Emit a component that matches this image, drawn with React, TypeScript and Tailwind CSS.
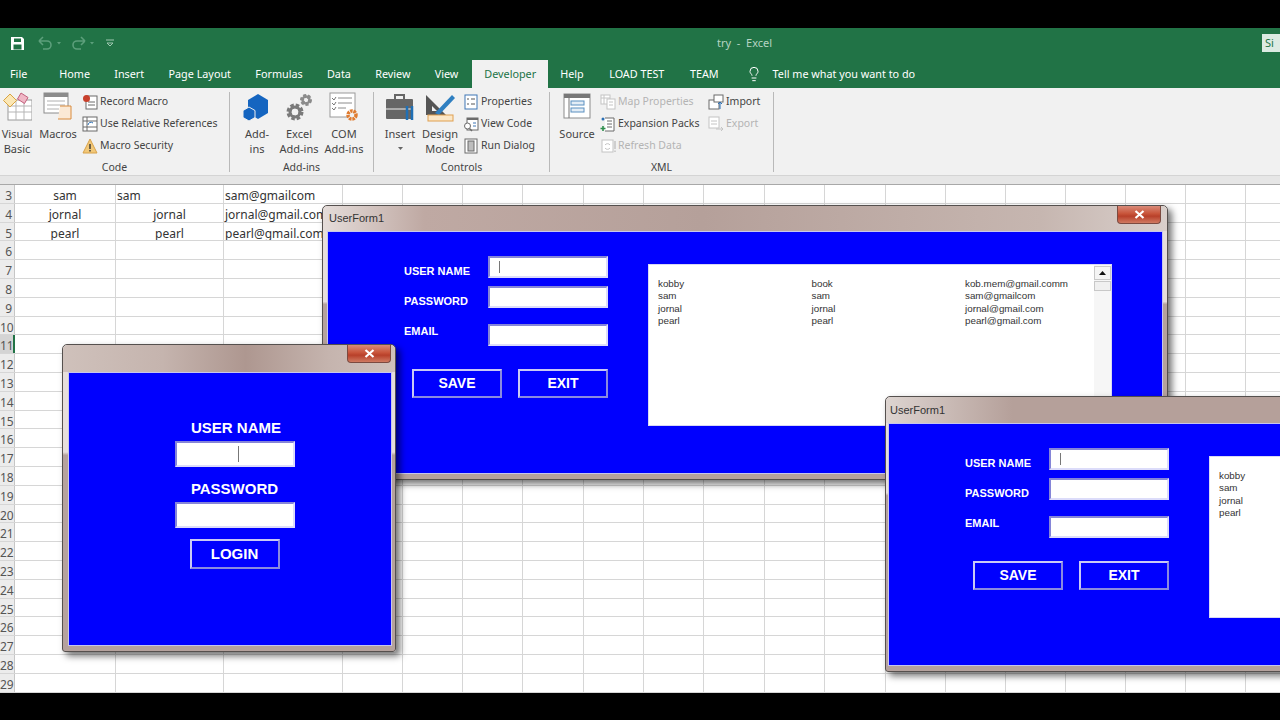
import React from 'react'
import { Lightbulb } from 'lucide-react'

const colWidths = [101, 108, 119, 60, 60, 60, 61, 60, 60, 61, 60, 61, 60, 60, 60, 60, 60, 60, 60, 35]
const rows = Array.from({ length: 27 }, (_, i) => i + 3)
const people = [
  ['kobby', 'book', 'kob.mem@gmail.comm'],
  ['sam', 'sam', 'sam@gmailcom'],
  ['jornal', 'jornal', 'jornal@gmail.com'],
  ['pearl', 'pearl', 'pearl@gmail.com'],
]

function VisualBasicIcon() {
  return (
    <svg width="30" height="30" viewBox="0 0 30 30">
      <rect x="6" y="8" width="24" height="20" fill="#fff" stroke="#9a9a9a" />
      <path d="M6 14h24M6 20h24M14 8v20M22 8v20" stroke="#b5b5b5" />
      <path d="M8 2l6.500 6.500L8 15 1.500 8.500z" fill="#fbe7b5" stroke="#d9a441" />
      <path d="M19 1l7 4.500-3.500 6-7-4.500z" fill="#f0b7c6" stroke="#c2607c" />
    </svg>
  )
}

function MacrosIcon() {
  return (
    <svg width="30" height="30" viewBox="0 0 30 30">
      <rect x="1" y="1" width="24" height="20" fill="#fff" stroke="#8c8c8c" />
      <rect x="1" y="1" width="24" height="4" fill="#8c8c8c" />
      <path d="M4 9h18M4 13h18M4 17h12" stroke="#b0b0b0" />
      <path d="M17 14h11v13H15" fill="#fbe9d5" stroke="#d98b3c" />
    </svg>
  )
}

function SmallIcon({ kind, faded }: { kind: string; faded?: boolean }) {
  const c = faded ? '#c4c4c4' : '#6b6b6b'
  return (
    <svg width="16" height="16" viewBox="0 0 16 16">
      {kind === 'record' && (
        <>
          <rect x="4" y="2" width="11" height="13" fill="#fff" stroke={c} />
          <path d="M6 8h7M6 11h7" stroke={c} />
          <circle cx="4.500" cy="4.500" r="3.500" fill="#c8402c" />
        </>
      )}
      {kind === 'relative' && (
        <>
          <rect x="1" y="1" width="14" height="14" fill="#fff" stroke={c} />
          <path d="M1 5h14M5 1v14M1 11h14" stroke={c} />
          <path d="M6 9a3 3 0 0 1 5-2" fill="none" stroke="#2a6fb5" />
        </>
      )}
      {kind === 'warning' && (
        <>
          <path d="M8 1l7 14H1z" fill="#f2c879" stroke="#d8a24a" />
          <path d="M8 6v5M8 12v1.500" stroke="#333" strokeWidth="1.400" />
        </>
      )}
      {kind === 'properties' && (
        <>
          <rect x="2" y="1" width="12" height="14" fill="#fff" stroke="#3f77b5" />
          <path d="M4 5h2M4 10h2M8 5h4M8 10h4" stroke="#555" />
        </>
      )}
      {kind === 'code' && (
        <>
          <rect x="4" y="2" width="11" height="12" fill="#fff" stroke={c} />
          <rect x="4" y="2" width="11" height="2" fill={c} />
          <path d="M10 7h3M10 10h3" stroke="#3f77b5" />
          <circle cx="4.500" cy="10" r="3" fill="#fff" stroke={c} />
          <path d="M6.500 12.500L9 15" stroke={c} strokeWidth="1.400" />
        </>
      )}
      {kind === 'dialog' && (
        <>
          <rect x="2" y="1" width="12" height="14" fill="#fff" stroke={c} />
          <rect x="5" y="3" width="6" height="10" fill="#bdbdbd" stroke={c} />
        </>
      )}
      {kind === 'map' && (
        <>
          <rect x="1" y="1" width="9" height="9" fill="#fff" stroke={c} />
          <path d="M1 4h9M4 1v9" stroke={c} />
          <rect x="7" y="5" width="8" height="10" fill="#fff" stroke={c} />
          <path d="M9 8h4M9 11h4" stroke={c} />
        </>
      )}
      {kind === 'packs' && (
        <>
          <path d="M5 2h9v13H5" fill="#fff" stroke={c} />
          <path d="M7 5h5M7 8h5M7 11h5" stroke={c} />
          <path d="M3 10v5M0.500 12.500h5" stroke="#2f8f4e" strokeWidth="1.600" />
          <circle cx="3" cy="3" r="1.500" fill="#2a6fb5" />
        </>
      )}
      {kind === 'refresh' && (
        <>
          <rect x="2" y="2" width="11" height="12" fill="#fff" stroke={c} />
          <path d="M5 7a3 3 0 0 1 5 0M10 10a3 3 0 0 1-5 0" fill="none" stroke={c} />
          <path d="M15 3v8M15 12.500v1.500" stroke={c} strokeWidth="1.500" />
        </>
      )}
      {kind === 'import' && (
        <>
          <rect x="1" y="6" width="10" height="9" fill="#fff" stroke={c} />
          <rect x="6" y="1" width="9" height="7" fill="#fff" stroke={c} />
          <path d="M12 15V8M10 10l2-2 2 2" fill="none" stroke="#2a6fb5" />
        </>
      )}
      {kind === 'export' && (
        <>
          <rect x="1" y="1" width="10" height="11" fill="#fff" stroke={c} />
          <path d="M3 5h6M3 8h6" stroke={c} />
          <path d="M8 13h7M13 11l2 2-2 2" fill="none" stroke={c} />
        </>
      )}
    </svg>
  )
}

function BigButton({ w, icon, lines }: { w: string; icon: React.ReactNode; lines: React.ReactNode[] }) {
  return (
    <div className={`flex flex-col items-center pt-[4px] shrink-0 ${w}`}>
      <div className="h-[34px] flex justify-center">{icon}</div>
      {lines.map((l, i) => (
        <div key={i} className="leading-[15px] whitespace-nowrap">
          {l}
        </div>
      ))}
    </div>
  )
}

function SmallButton({ kind, label, faded }: { kind: string; label: string; faded?: boolean }) {
  return (
    <div className={`h-[22px] flex items-center gap-[2px] whitespace-nowrap text-[10.500px] ${faded ? 'text-[#b4b4b4]' : ''}`}>
      <SmallIcon kind={kind} faded={faded} />
      <span>{label}</span>
    </div>
  )
}

function Group({ w, label, children }: { w: string; label: string; children: React.ReactNode }) {
  return (
    <div className={`flex flex-col shrink-0 h-full ${w}`}>
      <div className="flex flex-1 min-h-0 relative">{children}</div>
      <div className="h-[18px] pt-[1px] leading-[18px] text-[10.500px] text-center text-[#444]">{label}</div>
    </div>
  )
}

function Sep() {
  return <div className="w-px h-[80px] mt-[4px] shrink-0 bg-[#b9b9b9]" />
}

function Ribbon() {
  return (
    <div className="h-[87px] flex bg-[#f1f1f1] text-[11px] text-[#444] font-['Noto_Sans',sans-serif]">
      <Group w="w-[229px]" label="Code">
        <BigButton w="w-[34px]" icon={<VisualBasicIcon />} lines={['Visual', 'Basic']} />
        <BigButton w="w-[48px]" icon={<MacrosIcon />} lines={['Macros']} />
        <div className="pt-[3px]">
          <SmallButton kind="record" label="Record Macro" />
          <SmallButton kind="relative" label="Use Relative References" />
          <SmallButton kind="warning" label="Macro Security" />
        </div>
      </Group>
      <Sep />
      <Group w="w-[143px]" label="Add-ins">
        <div className="w-[8px]" />
        <BigButton
          w="w-[38px]"
          icon={
            <svg width="30" height="30" viewBox="0 0 30 30">
              <path d="M16 2l10 6v13l-10 6-10-6V8z" fill="#1565c0" />
              <path d="M7 15l6 3.500v7L7 29l-6-3.500v-7z" fill="#1565c0" stroke="#f1f1f1" />
            </svg>
          }
          lines={['Add-', 'ins']}
        />
        <BigButton
          w="w-[46px]"
          icon={
            <svg width="30" height="32" viewBox="0 0 30 32">
              <circle cx="11" cy="20" r="6" fill="none" stroke="#7a7a7a" strokeWidth="5" strokeDasharray="3 1.700" />
              <circle cx="11" cy="20" r="5" fill="none" stroke="#7a7a7a" strokeWidth="3" />
              <circle cx="22" cy="8" r="4" fill="none" stroke="#8c8c8c" strokeWidth="4" strokeDasharray="2.500 1.500" />
              <circle cx="22" cy="8" r="3.500" fill="none" stroke="#8c8c8c" strokeWidth="2.500" />
            </svg>
          }
          lines={['Excel', 'Add-ins']}
        />
        <BigButton
          w="w-[44px]"
          icon={
            <svg width="30" height="30" viewBox="0 0 30 30">
              <rect x="1" y="1" width="25" height="24" fill="#fff" stroke="#9a9a9a" />
              <path d="M9 6h14M9 11h14M9 16h8" stroke="#8c8c8c" />
              <path d="M3 6l2 2 2-3M3 11l2 2 2-3M3 16l2 2 2-3" fill="none" stroke="#777" />
              <circle cx="23" cy="23" r="4" fill="#f1f1f1" stroke="#e07b2e" strokeWidth="3.500" strokeDasharray="2.500 0.800" />
            </svg>
          }
          lines={['COM', 'Add-ins']}
        />
      </Group>
      <Sep />
      <Group w="w-[175px]" label="Controls">
        <div className="w-[8px]" />
        <BigButton
          w="w-[36px]"
          icon={
            <svg width="30" height="30" viewBox="0 0 30 30">
              <path d="M10 7V3h9v4" fill="none" stroke="#666" strokeWidth="2" />
              <rect x="1" y="7" width="27" height="20" rx="1" fill="#666" />
              <path d="M1 17h27" stroke="#f1f1f1" />
              <path d="M22 14v14M27 14v14" stroke="#1f6fb5" strokeWidth="2.500" />
            </svg>
          }
          lines={[
            'Insert',
            <svg key="c" width="7" height="15" viewBox="0 0 7 15">
              <path d="M1 6h5L3.500 9z" fill="#666" />
            </svg>,
          ]}
        />
        <BigButton
          w="w-[44px]"
          icon={
            <svg width="32" height="30" viewBox="0 0 32 30">
              <path d="M2 3v20h20z" fill="#555" />
              <path d="M8 14v5h5z" fill="#f1f1f1" />
              <path d="M11 21L28 3l3 3-16 17z" fill="#2f7fc1" />
              <rect x="4" y="23" width="25" height="6" fill="#fbe7c8" stroke="#e0a050" />
            </svg>
          }
          lines={['Design', 'Mode']}
        />
        <div className="pt-[3px] ml-[1px]">
          <SmallButton kind="properties" label="Properties" />
          <SmallButton kind="code" label="View Code" />
          <SmallButton kind="dialog" label="Run Dialog" />
        </div>
      </Group>
      <Sep />
      <Group w="w-[223px]" label="XML">
        <div className="w-[6px]" />
        <BigButton
          w="w-[42px]"
          icon={
            <svg width="28" height="30" viewBox="0 0 28 30">
              <rect x="1" y="2" width="26" height="24" fill="#fff" stroke="#8c8c8c" />
              <rect x="1" y="2" width="26" height="4" fill="#777" />
              <path d="M6 6v20" stroke="#777" />
              <rect x="8" y="9" width="13" height="4" fill="#e3edf6" stroke="#5a8fc0" />
              <rect x="8" y="16" width="13" height="4" fill="#e3edf6" stroke="#5a8fc0" />
            </svg>
          }
          lines={['Source']}
        />
        <div className="pt-[3px] ml-[2px] w-[108px]">
          <SmallButton kind="map" label="Map Properties" faded />
          <SmallButton kind="packs" label="Expansion Packs" />
          <SmallButton kind="refresh" label="Refresh Data" faded />
        </div>
        <div className="pt-[3px]">
          <SmallButton kind="import" label="Import" />
          <SmallButton kind="export" label="Export" faded />
        </div>
      </Group>
      <Sep />
    </div>
  )
}

function Sheet() {
  return (
    <div className="h-[507.600px] bg-white overflow-hidden font-['Noto_Sans',sans-serif] text-[12px] text-[#333]">
      {rows.map((r) => (
        <div key={r} className="flex h-[18.800px] border-b border-[#d6d6d6]">
          <div
            className={`w-[15px] shrink-0 text-right pr-[2px] pt-[2px] overflow-hidden leading-[17px] text-[#555] border-r ${
              r === 11 ? 'bg-[#d4d4d4] border-[#217346] border-r-2' : 'bg-[#ececec] border-[#c6c6c6]'
            }`}
          >
            {r}
          </div>
          {colWidths.map((w, c) => (
            <div
              key={c}
              className="shrink-0 border-r border-[#d6d6d6] leading-[17px] pt-[2px] px-[1px] whitespace-nowrap overflow-hidden"
              style={{ width: w }}
            >
              {r === 3 && c === 0 && <div className="text-center">sam</div>}
              {r === 3 && c === 1 && 'sam'}
              {r === 3 && c === 2 && 'sam@gmailcom'}
              {r === 4 && c === 0 && <div className="text-center">jornal</div>}
              {r === 4 && c === 1 && <div className="text-center">jornal</div>}
              {r === 4 && c === 2 && 'jornal@gmail.com'}
              {r === 5 && c === 0 && <div className="text-center">pearl</div>}
              {r === 5 && c === 1 && <div className="text-center">pearl</div>}
              {r === 5 && c === 2 && 'pearl@gmail.com'}
            </div>
          ))}
        </div>
      ))}
    </div>
  )
}

function Field({ h = 'h-[22px]', caretClass }: { h?: string; caretClass?: string }) {
  return (
    <div className={`w-[120px] bg-white border-2 border-t-[#8585d8] border-l-[#8585d8] border-r-[#dcdcfa] border-b-[#dcdcfa] flex items-center ${h}`}>
      {caretClass && <div className={`w-px bg-[#777] ${caretClass}`} />}
    </div>
  )
}

function FormButton({ label, big }: { label: string; big?: boolean }) {
  return (
    <div
      className={`w-[90px] flex items-center justify-center border-2 border-t-[#c9c9f5] border-l-[#c9c9f5] border-r-[#8a8ae0] border-b-[#8a8ae0] text-white font-bold ${
        big ? 'h-[30px] text-[15px]' : 'h-[29px] text-[14px]'
      }`}
    >
      {label}
    </div>
  )
}

function CloseButton() {
  return (
    <div className="w-[44px] h-[18px] rounded-b-[4px] border border-t-0 border-[#7c4a40] bg-[linear-gradient(180deg,#d98a78_0%,#c8543a_45%,#b8402a_60%,#d07a62_100%)] flex items-center justify-center">
      <svg width="11" height="9" viewBox="0 0 11 9">
        <path d="M1.500 1l8 7M9.500 1l-8 7" stroke="#fff" strokeWidth="2.200" />
      </svg>
    </div>
  )
}

function Window({
  pos,
  bar,
  body,
  titleText = 'pl-[6px] pt-[5px]',
  title,
  close,
  children,
}: {
  pos: string
  bar: string
  body: string
  titleText?: string
  title?: string
  close?: boolean
  children: React.ReactNode
}) {
  return (
    <div className={`absolute flex flex-col rounded-t-[5px] rounded-b-[3px] border border-[#55504e] bg-[linear-gradient(180deg,#e6dedb_0%,#e6dedb_35%,#b5a29d_36%,#b5a29d_100%)] shadow-[4px_4px_7px_rgba(0,0,0,0.55)] ${pos}`}>
      <div className={`shrink-0 flex items-start justify-between rounded-t-[5px] ${bar}`}>
        <div className={`text-[11px] leading-[14px] text-[#333] font-['Liberation_Sans',sans-serif] ${titleText}`}>{title}</div>
        {close && <CloseButton />}
      </div>
      <div className={`flex-1 min-h-0 bg-[#0000fe] border border-[#c6c6ee] overflow-hidden font-['Noto_Sans',sans-serif] ${body}`}>
        {children}
      </div>
    </div>
  )
}

function UserFormBody() {
  return (
    <div className="flex font-['Liberation_Sans',sans-serif]">
      <div className="pl-[76px] pt-[23px] w-[280px] shrink-0">
        <div className="grid grid-cols-[84px_120px] gap-y-[8px] text-white font-bold text-[11px] leading-[14px]">
          <div className="pt-[8px] whitespace-nowrap">USER NAME</div>
          <Field caretClass="h-[12px] ml-[9px]" />
          <div className="pt-[8px]">PASSWORD</div>
          <Field />
          <div className="mt-[8px]">EMAIL</div>
          <div className="mt-[8px]">
            <Field />
          </div>
        </div>
        <div className="flex gap-[16px] mt-[23px] ml-[8px]">
          <FormButton label="SAVE" />
          <FormButton label="EXIT" />
        </div>
      </div>
      <div className="ml-[40px] mt-[31px] w-[464px] h-[162px] shrink-0 flex bg-white border border-[#d8d8f4] text-[9.800px] leading-[12.300px] text-[#333] font-['Liberation_Sans',sans-serif]">
        <div className="flex-1 grid grid-cols-[153.500px_153.500px_1fr] content-start pl-[9px] pt-[13px]">
          {people.flat().map((t, i) => (
            <div key={i}>{t}</div>
          ))}
        </div>
        <div className="w-[17px] shrink-0 bg-[#f6f6f6] pt-[1px] flex flex-col gap-[1px]">
          <div className="h-[14px] bg-[#f4f4f4] border border-[#c8c8c8] flex items-center justify-center">
            <svg width="7" height="4" viewBox="0 0 7 4">
              <path d="M3.500 0L7 4H0z" fill="#111" />
            </svg>
          </div>
          <div className="h-[10px] bg-[#f0f0f0] border border-[#c8c8c8]" />
        </div>
      </div>
    </div>
  )
}

export default function App() {
  return (
    <div className="relative w-[1280px] h-[720px] overflow-hidden bg-black">
      <div className="h-[28px]" />
      <div className="h-[32px] pb-[2px] bg-[#217346] flex items-center relative font-['Noto_Sans',sans-serif]">
        <svg width="15" height="15" viewBox="0 0 15 15" className="ml-[10px]">
          <path d="M1 1h11l2 2v11H1z" fill="#fff" />
          <rect x="4" y="2.500" width="7" height="3.500" fill="#217346" />
          <rect x="3.500" y="8.500" width="8" height="5" fill="#217346" />
        </svg>
        <svg width="25" height="14" viewBox="0 0 25 14" className="ml-[13px]">
          <path d="M1 5h8a4 4 0 0 1 0 8H5M1 5l4-4M1 5l4 4" fill="none" stroke="#5c9f7b" strokeWidth="1.600" />
          <path d="M19 6h4l-2 2.500z" fill="#5c9f7b" />
        </svg>
        <svg width="25" height="14" viewBox="0 0 25 14" className="ml-[8px]">
          <path d="M14 5H6a4 4 0 0 0 0 8h4M14 5l-4-4M14 5l-4 4" fill="none" stroke="#5c9f7b" strokeWidth="1.600" />
          <path d="M19 6h4l-2 2.500z" fill="#5c9f7b" />
        </svg>
        <svg width="8" height="8" viewBox="0 0 8 8" className="ml-[10px]">
          <path d="M0 1h8M1 4h6l-3 3z" stroke="#9fc8b0" fill="none" />
        </svg>
        <div className="flex-1 text-center text-[11px] text-[#b6d3c3] pl-[113px]">try&nbsp; -&nbsp; Excel</div>
        <div className="w-[18px] h-[18px] bg-[#dcebe3] text-[#217346] text-[11px] leading-[18px] pl-[3px] overflow-hidden">Si</div>
      </div>
      <div className="h-[28px] bg-[#217346] flex items-stretch text-[10.800px] text-white font-['Noto_Sans',sans-serif]">
        <div className="pl-[10px] pr-[32px] leading-[28px]">File</div>
        <div className="flex gap-[24.300px] leading-[28px]">
          <span>Home</span>
          <span>Insert</span>
          <span>Page Layout</span>
          <span>Formulas</span>
          <span>Data</span>
          <span>Review</span>
          <span>View</span>
        </div>
        <div className="ml-[14px] px-[12px] bg-[#f1f1f1] text-[#217346] leading-[28px]">Developer</div>
        <div className="flex gap-[25.500px] ml-[12px] leading-[28px]">
          <span>Help</span>
          <span>LOAD TEST</span>
          <span>TEAM</span>
        </div>
        <div className="flex items-center ml-[27px] gap-[11px]">
          <Lightbulb size={16} strokeWidth={1.500} />
          <span>Tell me what you want to do</span>
        </div>
      </div>
      <Ribbon />
      <div className="h-[10px] bg-[#e6e6e6] border-y border-b-[#a8a8a8] border-t-[#d4d4d4]" />
      <Sheet />

      <Window
        pos="left-[322px] top-[205px] w-[846px] h-[275px]"
        bar="h-[25px] pr-[6px] bg-[linear-gradient(90deg,#e4dcd9_0%,#bfa9a3_12%,#b5a09a_45%,#c6b6b0_85%,#d9cfcb_100%)]"
        body="ml-[4px] mr-[4px] mb-[5px] pt-[1px]"
        title="UserForm1"
        close
      >
        <UserFormBody />
      </Window>

      <Window
        pos="left-[62px] top-[344px] w-[334px] h-[308px]"
        bar="h-[27px] pr-[4px] bg-[linear-gradient(90deg,#cfc1bb_0%,#c5b4ae_30%,#ae9790_55%,#c5b4ae_80%,#cfc1bb_100%)]"
        body="ml-[5px] mr-[3px] mb-[5px]"
        close
      >
        <div className="flex flex-col items-center pl-[9px] pt-[45px] text-white font-bold text-[15px] leading-[18px] font-['Liberation_Sans',sans-serif]">
          <div className="pl-[3px] relative top-[1px]">USER NAME</div>
          <div className="mt-[5px]">
            <Field h="h-[26px]" caretClass="h-[16px] ml-[61px]" />
          </div>
          <div className="mt-[12px] relative top-[1px]">PASSWORD</div>
          <div className="mt-[5px]">
            <Field h="h-[26px]" />
          </div>
          <div className="mt-[11px]">
            <FormButton label="LOGIN" big />
          </div>
        </div>
      </Window>

      <Window
        pos="left-[885px] top-[396px] w-[846px] h-[276px]"
        bar="h-[26px] pr-[6px] bg-[linear-gradient(90deg,#ddd4d0_0%,#b5a09a_15%,#b5a09a_100%)]"
        body="ml-[2px] mr-[6px] mb-[5px] pt-[1px]"
        titleText="pl-[4px] pt-[6px]"
        title="UserForm1"
      >
        <UserFormBody />
      </Window>
    </div>
  )
}
